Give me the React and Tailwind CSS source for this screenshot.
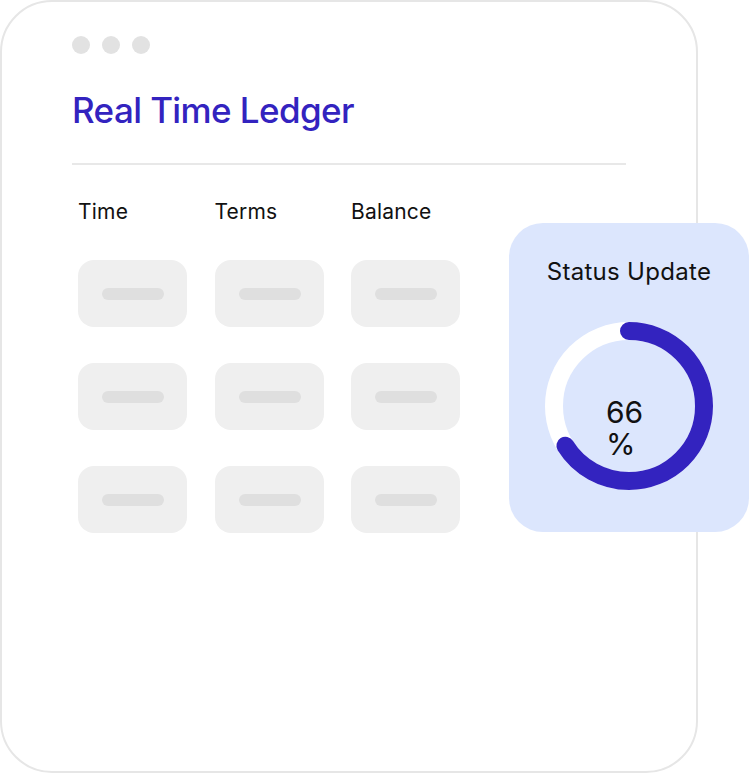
import React from 'react';

const columns = ['Time', 'Terms', 'Balance'];
const rows = [0, 1, 2];

const Donut = ({ value }) => {
    const r = 75;
    const c = 2 * Math.PI * r;
    return (
        <svg width="186" height="186" viewBox="0 0 186 186" className="absolute inset-0">
            <circle cx="93" cy="93" r={r} fill="none" stroke="#ffffff" strokeWidth="18" />
            <circle cx="93" cy="93" r={r} fill="none" stroke="#3323bf" strokeWidth="18" strokeLinecap="round"
                strokeDasharray={`${(c * value) / 100} ${c}`} transform="rotate(-90 93 93)" />
        </svg>
    );
};

const App = () => {
    return (
        <div className="w-[749px] h-[774px] bg-white relative" style={{ fontFamily: 'Inter, "Noto Sans", sans-serif' }}>
            <div className="w-[698px] h-[773px] border-2 border-[#e6e6e6] rounded-[52px] pt-[34px] pl-[70px] pr-[70px]">
                <div className="flex gap-[12px]">
                    <span className="w-[18px] h-[18px] rounded-full bg-[#e2e2e2]" />
                    <span className="w-[18px] h-[18px] rounded-full bg-[#e2e2e2]" />
                    <span className="w-[18px] h-[18px] rounded-full bg-[#e2e2e2]" />
                </div>
                <h1 className="mt-[36px] text-[35px] leading-[40px] font-medium text-[#3323bf] tracking-[-0.6px]">Real Time Ledger</h1>
                <div className="mt-[33px] h-[2px] bg-[#e8e8e8]" />
                <div className="pl-[6px]">
                    <div className="mt-[34px] grid grid-cols-[109px_109px_109px] gap-x-[27.5px]">
                        {columns.map(c => (
                            <span key={c} className="text-[21px] leading-[26px] text-[#111111] tracking-[0.2px]">{c}</span>
                        ))}
                    </div>
                    <div className="mt-[35px] grid grid-cols-[109px_109px_109px] gap-x-[27.5px] gap-y-[36px]">
                        {rows.map(r => columns.map(c => (
                            <div key={`${r}-${c}`} className="h-[67px] rounded-[16px] bg-[#efefef] flex items-center pl-[24px]">
                                <div className="w-[62px] h-[12px] rounded-full bg-[#dfdfdf]" />
                            </div>
                        )))}
                    </div>
                </div>
            </div>
            <div className="absolute left-[509px] top-[223px] w-[240px] h-[309px] rounded-[34px] bg-[#dce6fd] flex flex-col items-center">
                <p className="mt-[34px] text-[24px] leading-[30px] text-[#111111] tracking-[0.3px]">Status Update</p>
                <div className="relative mt-[26px] w-[186px] h-[186px] flex justify-center pt-[83px] pr-[2px]">
                    <Donut value={66} />
                    <p className="relative w-[44px] text-left text-[30px] leading-[32px] text-[#111111]">66 %</p>
                </div>
            </div>
        </div>
    );
};

export default App;
